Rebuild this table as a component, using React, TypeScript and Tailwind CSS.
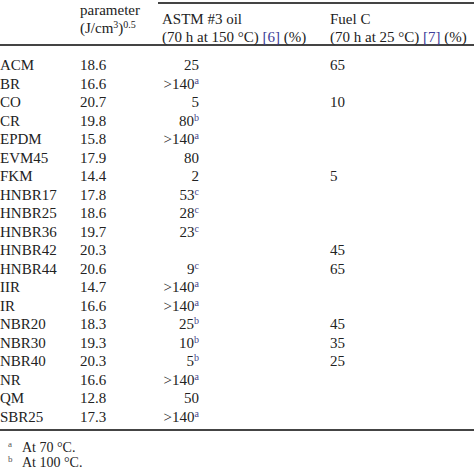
const rows: [string, string, string, string, string][] = [
  ['ACM', '18.6', '25', '', '65'],
  ['BR', '16.6', '>140', 'a', ''],
  ['CO', '20.7', '5', '', '10'],
  ['CR', '19.8', '80', 'b', ''],
  ['EPDM', '15.8', '>140', 'a', ''],
  ['EVM45', '17.9', '80', '', ''],
  ['FKM', '14.4', '2', '', '5'],
  ['HNBR17', '17.8', '53', 'c', ''],
  ['HNBR25', '18.6', '28', 'c', ''],
  ['HNBR36', '19.7', '23', 'c', ''],
  ['HNBR42', '20.3', '', '', '45'],
  ['HNBR44', '20.6', '9', 'c', '65'],
  ['IIR', '14.7', '>140', 'a', ''],
  ['IR', '16.6', '>140', 'a', ''],
  ['NBR20', '18.3', '25', 'b', '45'],
  ['NBR30', '19.3', '10', 'b', '35'],
  ['NBR40', '20.3', '5', 'b', '25'],
  ['NR', '16.6', '>140', 'a', ''],
  ['QM', '12.8', '50', '', ''],
  ['SBR25', '17.3', '>140', 'a', ''],
]

function Sup({ children }: { children: string }) {
  return <sup className="text-[10px] text-[#4a4a8c]">{children}</sup>
}

export default function App() {
  return (
    <div className="w-[474px] h-[474px] overflow-hidden bg-white text-[15px] text-[#222] font-['Liberation_Serif',serif]">
      {/* header */}
      <div className="grid grid-cols-[80px_78px_1fr] h-[46px] border-b-2 border-[#444] leading-[18px]">
        <div />
        <div className="pt-[1px] whitespace-nowrap">
          <div>parameter</div>
          <div>
            (J/cm<sup className="text-[10px]">3</sup>)<sup className="text-[10px]">0.5</sup>
          </div>
        </div>
        <div className="mt-[2px] border-t-2 border-[#444] pt-[6px] grid grid-cols-[172px_1fr] whitespace-nowrap">
          <div className="pl-[4px]">
            <div>ASTM #3 oil</div>
            <div>
              (70 h at 150 °C) <span className="text-[#3d3d99]">[6]</span> (%)
            </div>
          </div>
          <div>
            <div>Fuel C</div>
            <div>
              (70 h at 25 °C) <span className="text-[#3d3d99]">[7]</span> (%)
            </div>
          </div>
        </div>
      </div>

      {/* body */}
      <div className="pt-[10px] pb-[3px] border-b-2 border-[#444] leading-[18.5px]">
        {rows.map(([name, param, astm, sup, fuel]) => (
          <div key={name} className="grid grid-cols-[80px_82px_168px_1fr] h-[18.5px]">
            <div>{name}</div>
            <div>{param}</div>
            <div className="w-[37px] text-right whitespace-nowrap">
              {astm}
              {sup && <Sup>{sup}</Sup>}
            </div>
            <div>{fuel}</div>
          </div>
        ))}
      </div>

      {/* footnotes */}
      <div className="pt-[9px] leading-[15px] text-[14px] pl-[8px] flex flex-col">
        <div className="flex items-start">
          <span className="w-[14px] text-[9px] leading-[9px] text-[#555]">a</span>
          <span>At 70 °C.</span>
        </div>
        <div className="flex items-start">
          <span className="w-[14px] text-[9px] leading-[9px] text-[#555]">b</span>
          <span>At 100 °C.</span>
        </div>
      </div>
    </div>
  )
}
